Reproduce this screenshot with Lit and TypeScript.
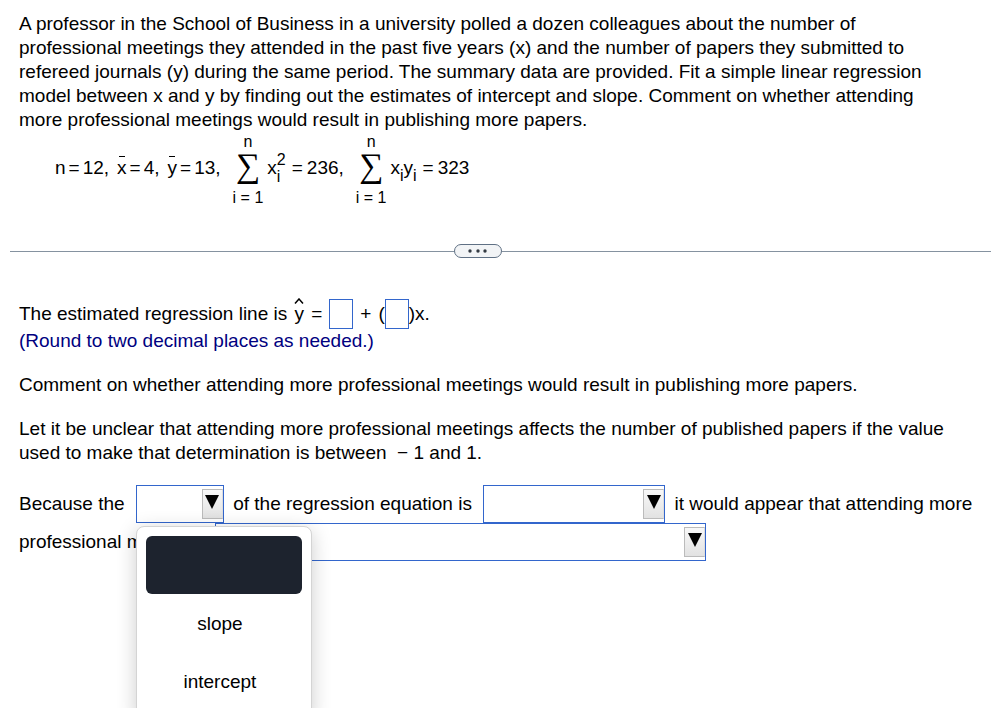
import { LitElement, html, css } from "lit";
import { customElement, property, state } from "lit/decorators.js";

@customElement("drop-down")
class DropDown extends LitElement {
  @property() label = "";
  @property({ type: Array }) options: string[] = [];
  @property({ type: Boolean }) open = false;
  @state() private value = "";

  static styles = css`
    :host {
      display: inline-block;
      position: relative;
      height: 38px;
      margin: 0 4px 0 6px;
      vertical-align: top;
    }
    .box {
      appearance: none;
      display: block;
      box-sizing: border-box;
      width: 100%;
      height: 38px;
      margin: 0;
      padding: 0 26px 0 8px;
      border: 1px solid #3366cc;
      border-radius: 0;
      background: #fff;
      font: inherit;
      color: inherit;
    }
    .arrow {
      position: absolute;
      top: 4px;
      right: 1px;
      box-sizing: border-box;
      display: flex;
      justify-content: center;
      width: 21px;
      height: 30px;
      padding-top: 5px;
      border: 1px solid #bbb;
      border-right-color: #ddd;
      background: linear-gradient(#f8f8f8, #e2e2e2);
      pointer-events: none;
    }
    .menu {
      position: absolute;
      z-index: 2;
      top: 41px;
      left: 0;
      box-sizing: border-box;
      width: 176px;
      padding: 9px;
      border: 1px solid #d4d4d4;
      border-radius: 8px;
      background: #fff;
      box-shadow: 0 4px 20px rgba(0, 0, 0, 0.2);
    }
    .option {
      display: block;
      width: 100%;
      height: 58px;
      padding: 2px 8px 0 0;
      border: 0;
      border-radius: 6px;
      background: none;
      font: inherit;
      color: #000;
      text-align: center;
    }
    .option[aria-selected="true"] {
      background: #1d232e;
      color: #fff;
    }
  `;

  private pick(v: string) {
    this.value = v;
    this.open = false;
  }

  render() {
    return html`
      <select class="box" aria-label=${this.label} .value=${this.value}>
        ${["", ...this.options].map((o) => html`<option value=${o}>${o}</option>`)}
      </select>
      <span class="arrow" aria-hidden="true">
        <svg width="14" height="14" viewBox="0 0 14 14"><path d="M0 0h14l-7 14z" fill="#000" /></svg>
      </span>
      ${this.open
        ? html`<div class="menu" role="listbox" aria-label=${this.label}>
            ${["", ...this.options].map(
              (o) => html`<button
                class="option"
                role="option"
                aria-label=${o || "blank"}
                aria-selected=${o === this.value ? "true" : "false"}
                @click=${() => this.pick(o)}
              >${o}</button>`
            )}
          </div>`
        : null}
    `;
  }
}

@customElement("sum-sign")
class SumSign extends LitElement {
  static styles = css`
    :host {
      display: grid;
      grid-template-rows: 16px 40px 16px;
      justify-items: center;
      align-items: start;
      padding-top: 4px;
    }
    .limit {
      font-size: 16px;
      line-height: 16px;
    }
    .sigma {
      font: 34px/32px "Liberation Serif", serif;
    }
  `;

  render() {
    return html`
      <span class="limit">n</span>
      <span class="sigma">∑</span>
      <span class="limit">i = 1</span>
    `;
  }
}

@customElement("app-root")
class AppRoot extends LitElement {
  static styles = css`
    :host {
      display: block;
      box-sizing: border-box;
      height: 100vh;
      overflow: hidden;
      background: #fff;
      color: #000;
      font: 19px/24px "Liberation Sans", Arial, sans-serif;
    }
    p {
      margin: 0;
    }
    .problem {
      padding: 12px 56px 0 19px;
    }
    .formula {
      display: flex;
      align-items: center;
      height: 72px;
      padding-left: 36px;
      gap: 8px;
    }
    .term {
      display: flex;
      align-items: center;
      gap: 3px;
    }
    .total {
      gap: 4px;
      padding-left: 4px;
    }
    .accent {
      display: inline-grid;
      justify-items: center;
    }
    .accent > * {
      grid-area: 1 / 1;
    }
    .mark {
      align-self: start;
    }
    .hat {
      margin-top: -4px;
    }
    .scripts {
      display: inline-grid;
      font-size: 16px;
      line-height: 17px;
    }
    .sub {
      font-size: 16px;
      line-height: 16px;
      padding-top: 16px;
    }
    .symbol {
      display: flex;
      align-items: center;
      padding-right: 2px;
    }
    .divider {
      display: flex;
      align-items: center;
      padding: 40px 14px 0 10px;
    }
    .rule {
      flex: 10;
      height: 1px;
      background: #8592a0;
    }
    .rule.end {
      flex: 11;
    }
    .more {
      display: flex;
      align-items: center;
      justify-content: center;
      width: 48px;
      height: 14px;
      padding: 0;
      border: 1px solid #5f7084;
      border-radius: 7px;
      background: #f2f4f6;
    }
    .answer {
      display: flex;
      flex-direction: column;
      gap: 20px;
      padding: 41px 20px 0 19px;
    }
    .line {
      display: flex;
      align-items: center;
      height: 30px;
      gap: 7px;
    }
    .group {
      display: flex;
      align-items: center;
    }
    .blank {
      box-sizing: border-box;
      width: 24px;
      height: 30px;
      padding: 0 2px;
      border: 1px solid #3366cc;
      border-radius: 0;
      background: #fff;
      font: inherit;
    }
    .hint {
      color: #000080;
    }
    .choices {
      line-height: 38px;
    }
    .short {
      width: 88px;
    }
    .medium {
      width: 182px;
    }
    .long {
      width: 491px;
    }
  `;

  private bar(letter: string) {
    return html`<span class="accent">
      <span>${letter}</span>
      <svg class="mark" width="8" height="2" aria-hidden="true"><path d="M1 .5h6" stroke="#000" /></svg>
    </span>`;
  }

  render() {
    return html`
      <section class="problem">
        <p>
          A professor in the School of Business in a university polled a dozen colleagues about the
          number of professional meetings they attended in the past five years (x) and the number of
          papers they submitted to refereed journals (y) during the same period. The summary data are
          provided. Fit a simple linear regression model between x and y by finding out the estimates
          of intercept and slope. Comment on whether attending more professional meetings would result
          in publishing more papers.
        </p>
        <div class="formula">
          <span class="term"><span>n</span><span>=</span><span>12,</span></span>
          <span class="term">${this.bar("x")}<span>=</span><span>4,</span></span>
          <span class="term">${this.bar("y")}<span>=</span><span>13,</span></span>
          <span class="term total">
            <sum-sign></sum-sign>
            <span class="symbol">x<span class="scripts"><span>2</span><span>i</span></span></span>
            <span>=</span><span>236,</span>
          </span>
          <span class="term total">
            <sum-sign></sum-sign>
            <span class="symbol">x<span class="sub">i</span>y<span class="sub">i</span></span>
            <span>=</span><span>323</span>
          </span>
        </div>
      </section>

      <div class="divider">
        <span class="rule"></span>
        <button class="more" aria-label="Show more">
          <svg width="20" height="4" viewBox="0 0 20 4" aria-hidden="true">
            <g fill="#333a42"><circle cx="2" cy="2" r="1.7" /><circle cx="10" cy="2" r="1.7" /><circle cx="17" cy="2" r="1.7" /></g>
          </svg>
        </button>
        <span class="rule end"></span>
      </div>

      <section class="answer">
        <div>
          <div class="line">
            <span>The estimated regression line is</span>
            <span class="accent">
              <span>y</span>
              <svg class="mark hat" width="10" height="6" aria-hidden="true"><path d="M1 5.500l4-4.500 4 4.500" fill="none" stroke="#000" stroke-width="1.500" /></svg>
            </span>
            <span>=</span>
            <input class="blank" aria-label="Intercept" />
            <span>+</span>
            <span class="group">(<input class="blank" aria-label="Slope" />)x.</span>
          </div>
          <p class="hint">(Round to two decimal places as needed.)</p>
        </div>
        <p>Comment on whether attending more professional meetings would result in publishing more papers.</p>
        <p>
          Let it be unclear that attending more professional meetings affects the number of published
          papers if the value used to make that determination is between &nbsp;− 1 and 1.
        </p>
        <div class="choices">
          Because the
          <drop-down class="short" label="Coefficient" open .options=${["slope", "intercept"]}></drop-down>
          of the regression equation is
          <drop-down class="medium" label="Value"></drop-down>
          it would appear that attending more professional meetings
          <drop-down class="long" label="Conclusion"></drop-down>
        </div>
      </section>
    `;
  }
}
